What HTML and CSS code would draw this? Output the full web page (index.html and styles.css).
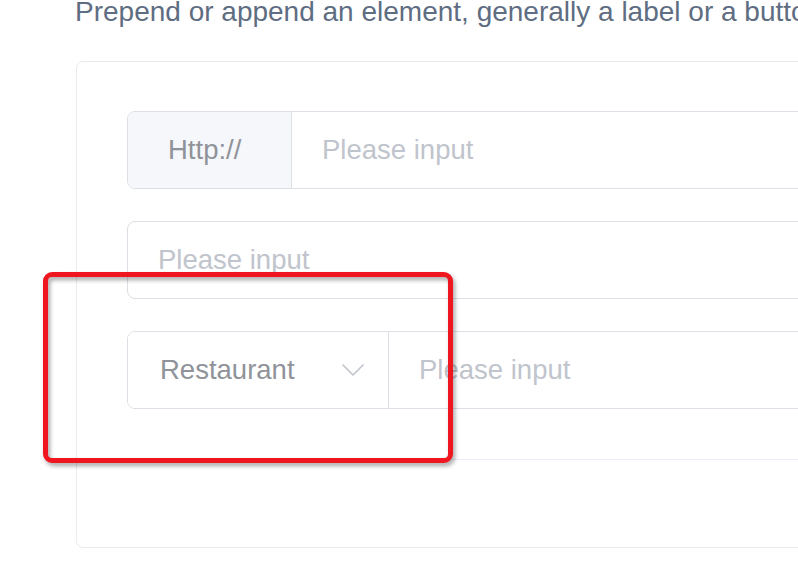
FILE: index.html
```html
<!DOCTYPE html>
<html lang="en">
<head>
<meta charset="utf-8">
<title>Input group</title>
<link rel="stylesheet" href="styles.css">
</head>
<body>
<div class="page">
  <p class="desc">Prepend or append an element, generally a label or a button.</p>
  <div class="demo">
    <div class="source">
      <div class="group">
        <div class="prepend">Http://</div>
        <div class="field"><span class="placeholder">Please input</span></div>
      </div>
      <div class="group">
        <div class="field field-solo"><span class="placeholder">Please input</span></div>
      </div>
      <div class="group">
        <div class="select">
          <span class="select-value">Restaurant</span>
          <svg class="chevron" width="22" height="12" viewBox="0 0 22 12" aria-hidden="true">
            <polyline points="1,1 11,11 21,1" fill="none" stroke="#c0c4cc" stroke-width="1.6" stroke-linecap="round" stroke-linejoin="round"/>
          </svg>
        </div>
        <div class="field"><span class="placeholder">Please input</span></div>
      </div>
    </div>
    <div class="meta"></div>
  </div>
</div>
<div class="highlight"></div>
</body>
</html>
```
FILE: styles.css
```css
html, body {
  margin: 0;
  padding: 0;
  background: #ffffff;
  overflow: hidden;
}

body {
  font-family: "Liberation Sans", Arial, sans-serif;
  width: 798px;
  height: 578px;
  position: relative;
}

.page {
  padding-left: 76px;
  width: 1200px;
}

.desc {
  margin: 0 0 0 -1px;
  font-size: 28px;
  line-height: 23px;
  color: #5e6d82;
  white-space: nowrap;
}

.demo {
  margin-top: 38px;
  width: 1100px;
  border: 1px solid #ebebeb;
  border-radius: 7px;
  box-sizing: border-box;
}

.source {
  padding: 49px 50px 50px;
  display: flex;
  flex-direction: column;
  gap: 32px;
}

.group {
  display: flex;
  height: 78px;
  box-sizing: border-box;
  border: 1px solid #dcdfe6;
  border-radius: 8px;
  overflow: hidden;
  font-size: 27.5px;
}

.prepend {
  box-sizing: border-box;
  width: 164px;
  flex: none;
  padding-left: 40px;
  background: #f5f7fa;
  border-right: 1px solid #dcdfe6;
  color: #909399;
  display: flex;
  align-items: center;
  white-space: nowrap;
}

.select {
  box-sizing: border-box;
  width: 261px;
  flex: none;
  padding-left: 32px;
  padding-right: 24px;
  border-right: 1px solid #dcdfe6;
  background: #ffffff;
  color: #909399;
  display: flex;
  align-items: center;
  justify-content: space-between;
  white-space: nowrap;
}

.chevron {
  display: block;
  flex: none;
}

.field {
  flex: 1;
  padding-left: 30px;
  display: flex;
  align-items: center;
  white-space: nowrap;
}

.field-solo {
  padding-left: 30px;
}

.placeholder {
  color: #c0c4cc;
}

.meta {
  height: 87px;
  border-top: 1px solid #eaeefb;
}

.highlight {
  position: absolute;
  left: 43px;
  top: 272px;
  width: 410px;
  height: 191px;
  box-sizing: border-box;
  border: 5px solid #ef1620;
  border-radius: 9px;
  filter: drop-shadow(2px 3px 2px rgba(0, 0, 0, 0.35));
}
```
